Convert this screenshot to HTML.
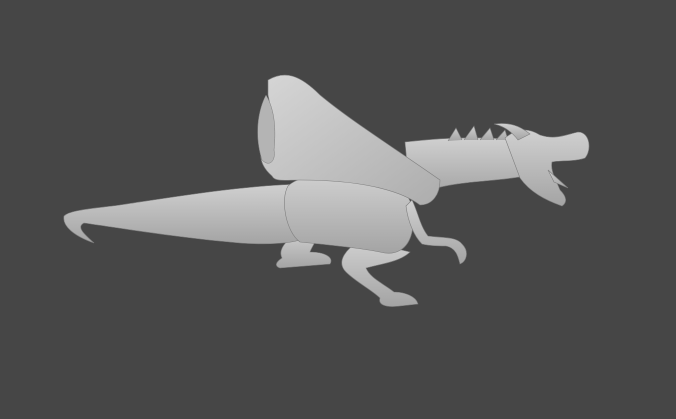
<!DOCTYPE html>
<html><head><style>html,body{margin:0;padding:0;background:#464646;width:676px;height:419px;overflow:hidden}</style></head>
<body>
<svg width="676" height="419" viewBox="0 0 676 419" xmlns="http://www.w3.org/2000/svg">
<defs>
<linearGradient id="g" x1="0" y1="0" x2="0" y2="1"><stop offset="0" stop-color="#d0d0d0"/><stop offset="1" stop-color="#a4a4a4"/></linearGradient>
<linearGradient id="c" x1="0" y1="0" x2="1" y2="1"><stop offset="0" stop-color="#d6d6d6"/><stop offset="1" stop-color="#adadad"/></linearGradient>
</defs>
<rect width="676" height="419" fill="#464646"/>
<g fill="url(#g)" stroke="#7e7e7e" stroke-width="0.6">
<!-- back left leg -->
<path d="M300 232 C285 240 278 250 282 258 C276 262 274 266 280 268 L330 264 C334 258 326 252 310 252 C312 246 318 240 316 234 Z"/>
<!-- back right leg -->
<path d="M360 240 C345 250 336 262 346 272 C356 282 372 290 380 298 C378 304 384 308 400 306 L418 304 C416 296 404 292 394 292 C384 284 370 278 366 268 C380 264 400 262 410 252 Z"/>
<!-- tail -->
<path d="M300 184 C240 186 180 196 120 205 C90 209 70 210 64 216 C62 226 74 236 94 243 C84 234 76 227 84 223 C120 228 180 238 240 243 C270 245 290 243 300 240 Z"/>
<!-- body -->
<path d="M288 186 C300 174 340 170 380 176 C405 182 418 205 412 232 C408 250 395 256 380 252 C360 248 330 245 300 242 C286 232 280 200 288 186 Z"/>
<!-- arm -->
<path d="M412 200 C418 212 420 226 428 236 C440 238 456 236 462 244 C470 252 466 262 460 264 C458 256 456 248 446 246 C438 246 430 246 422 244 C414 236 408 222 406 206 Z"/>
<!-- neck -->
<path d="M405 142 C440 138 480 136 515 140 L530 175 C500 182 460 180 430 190 L410 195 Z"/>
<!-- spikes -->
<path d="M448 141 L456 128 L462 140 M464 140 L474 126 L478 140 M480 140 L490 128 L494 140 M496 140 L505 130 L508 140"/>
<!-- head -->
<path d="M505 138 C515 130 525 126 540 135 C555 140 565 135 578 132 C590 132 592 150 585 158 C575 162 560 160 552 162 C550 170 556 180 560 190 C566 196 568 202 562 206 C545 200 530 192 520 178 Z"/>
<path d="M548 170 L568 188 L554 182 Z"/>
<!-- horn -->
<path d="M494 124 C510 122 520 126 530 134 L518 140 C512 132 504 126 494 124 Z"/>
</g>
<!-- cape -->
<path d="M268 80 C285 70 300 75 320 95 C350 120 390 145 440 180 C440 195 432 205 420 205 C400 190 360 180 300 180 C285 180 275 182 272 176 C265 170 258 160 262 150 C270 130 272 110 268 95 Z" fill="url(#c)" stroke="#7e7e7e" stroke-width="0.6"/>
<path d="M266 95 C258 110 254 135 262 160 C270 168 276 160 274 150 C276 130 275 110 266 95 Z" fill="#b4b4b4" stroke="#7e7e7e" stroke-width="0.5"/>
</svg>
</body></html>
